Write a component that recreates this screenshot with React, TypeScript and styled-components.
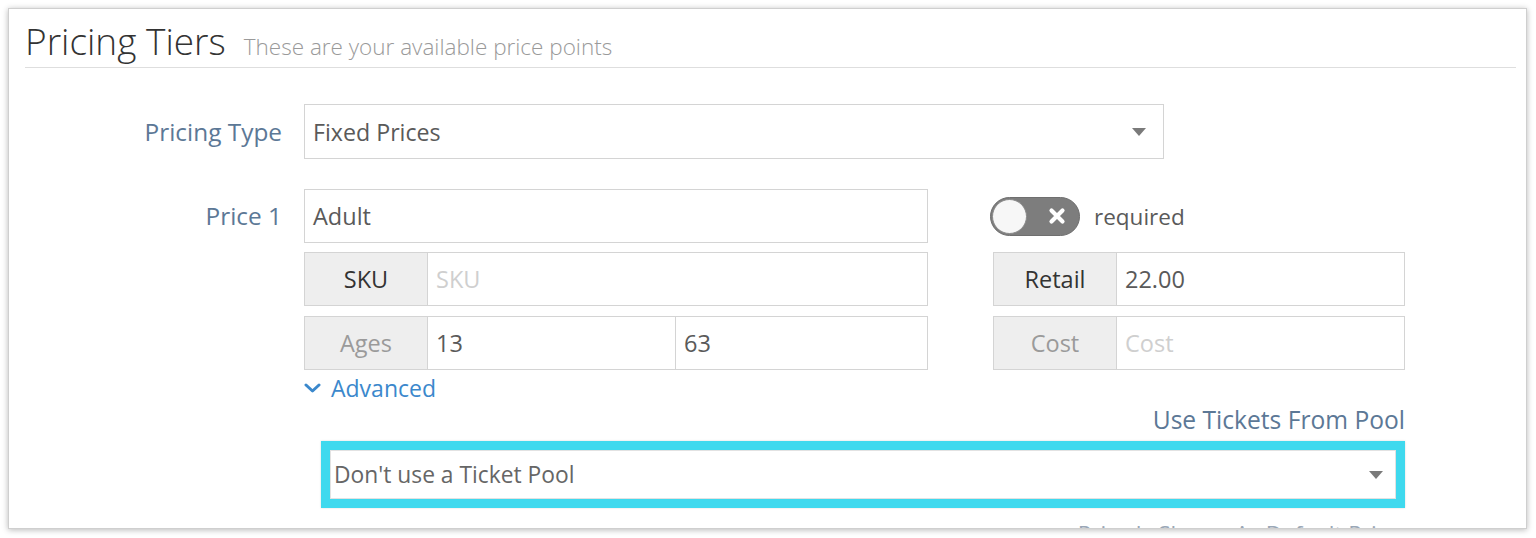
import React from "react";
import styled, { createGlobalStyle } from "styled-components";

const GlobalStyle = createGlobalStyle`
  html, body { margin: 0; padding: 0; background: #ffffff; }
  body { font-family: "Open Sans", "Noto Sans", sans-serif; }
  * { box-sizing: border-box; }
`;

const Page = styled.div`
  padding: 8px;
`;

const Card = styled.section`
  width: 1519px;
  height: 521px;
  background: #fff;
  border: 1px solid #cfcfcf;
  box-shadow: 0 1px 6px rgba(0, 0, 0, 0.28);
  overflow: hidden;
  padding: 0 10px 0 16px;
`;

const Header = styled.header`
  display: flex;
  align-items: baseline;
  gap: 18px;
  height: 59px;
  padding-top: 11px;
  border-bottom: 1px solid #dedede;
`;

const Title = styled.h1`
  margin: 0;
  font-size: 37px;
  font-weight: 300;
  color: #333;
  line-height: 42px;
`;

const Subtitle = styled.span`
  font-size: 22.5px;
  font-weight: 300;
  color: #9a9a9a;
`;

const Form = styled.div`
  padding-top: 36px;
`;

const Row = styled.div<{ $mt?: number }>`
  display: grid;
  grid-template-columns: 257px 1fr;
  column-gap: 22px;
  margin-top: ${(p) => p.$mt ?? 0}px;
`;

const Label = styled.label<{ $h?: number }>`
  text-align: right;
  font-size: 24.4px;
  color: #5c7896;
  height: ${(p) => p.$h ?? 54}px;
  line-height: ${(p) => p.$h ?? 54}px;
  white-space: nowrap;
`;

const SelectBox = styled.div<{ $w?: number }>`
  position: relative;
  width: ${(p) => (p.$w ? `${p.$w}px` : "100%")};
  height: 55px;
  border: 1px solid #d4d4d4;
  background: #fff;
  display: flex;
  align-items: center;
  padding: 0 8px;
  font-size: 23.2px;
  color: #5a5a5a;
`;

const Caret = styled.svg<{ $right: number }>`
  position: absolute;
  right: ${(p) => p.$right}px;
  top: 50%;
  margin-top: -4px;
`;

const Columns = styled.div`
  display: grid;
  grid-template-columns: 624px 412px;
  column-gap: 65px;
`;

const Stack = styled.div`
  display: flex;
  flex-direction: column;
`;

const Input = styled.div<{ $placeholder?: boolean }>`
  flex: 1;
  height: 54px;
  border: 1px solid #d4d4d4;
  background: #fff;
  display: flex;
  align-items: center;
  padding: 0 8px;
  font-size: 23.5px;
  color: ${(p) => (p.$placeholder ? "#cfcfcf" : "#5a5a5a")};
  min-width: 0;
`;

const Group = styled.div<{ $mt?: number }>`
  display: flex;
  height: 54px;
  margin-top: ${(p) => p.$mt ?? 0}px;
  & > * + * { border-left: none; }
`;

const Addon = styled.div<{ $muted?: boolean }>`
  flex: 0 0 124px;
  height: 54px;
  border: 1px solid #d4d4d4;
  background: #eeeeee;
  display: flex;
  align-items: center;
  justify-content: center;
  font-size: 23.5px;
  color: ${(p) => (p.$muted ? "#9a9a9a" : "#333")};
`;

const HalfInput = styled(Input)<{ $w: number }>`
  flex: 0 0 ${(p) => p.$w}px;
`;

const AdvancedLink = styled.a`
  display: flex;
  align-items: center;
  gap: 10px;
  margin-top: 4px;
  height: 28px;
  font-size: 23px;
  color: #3b88cc;
  text-decoration: none;
  cursor: pointer;
`;

const ToggleRow = styled.div`
  display: flex;
  align-items: center;
  height: 54px;
  margin-left: -3px;
  gap: 14px;
  font-size: 22.5px;
  color: #5a5a5a;
`;

const Toggle = styled.div`
  position: relative;
  width: 90px;
  height: 39px;
  border-radius: 20px;
  background: #7d7d7d;
  border: 1px solid #6f6f6f;
  display: flex;
  align-items: center;
  justify-content: flex-end;
  padding-right: 13px;
`;

const Knob = styled.span`
  position: absolute;
  left: 1px;
  top: 1px;
  width: 35px;
  height: 35px;
  border-radius: 50%;
  background: #f7f7f7;
  border: 1px solid #8a8a8a;
`;

const PoolLabelRow = styled.div`
  width: 1380px;
  text-align: right;
  font-size: 24.6px;
  color: #5c7896;
  line-height: 28px;
  margin-top: 4px;
`;

const PoolWrap = styled.div`
  margin-left: 296px;
  margin-top: 7px;
  width: 1084px;
  border: 9px solid #3fd9ee;
  box-shadow: 0 0 2px rgba(0, 0, 0, 0.15);
`;

const PoolSelect = styled.div`
  position: relative;
  height: 49px;
  background: #fff;
  border: 1px solid #e2e2e2;
  display: flex;
  align-items: center;
  padding: 0 3px;
  font-size: 22.8px;
  color: #666;
`;

const FootLabel = styled.div`
  width: 1375px;
  text-align: right;
  font-size: 22.5px;
  color: #9aa7b6;
  line-height: 28px;
  margin-top: 12px;
`;

const CaretIcon = ({ right }: { right: number }) => (
  <Caret $right={right} width="14" height="8" viewBox="0 0 14 8">
    <path d="M0 0 H14 L7 8 Z" fill="#7a7a7a" />
  </Caret>
);

export default function App() {
  return (
    <>
      <GlobalStyle />
      <Page>
        <Card>
          <Header>
            <Title>Pricing Tiers</Title>
            <Subtitle>These are your available price points</Subtitle>
          </Header>
          <Form>
            <Row>
              <Label $h={55}>Pricing Type</Label>
              <SelectBox $w={860}>
                Fixed Prices
                <CaretIcon right={17} />
              </SelectBox>
            </Row>
            <Row $mt={30}>
              <Label>Price 1</Label>
              <Columns>
                <Stack>
                  <Group>
                    <Input>Adult</Input>
                  </Group>
                  <Group $mt={9}>
                    <Addon>SKU</Addon>
                    <Input $placeholder>SKU</Input>
                  </Group>
                  <Group $mt={10}>
                    <Addon $muted>Ages</Addon>
                    <HalfInput $w={248}>13</HalfInput>
                    <HalfInput $w={252}>63</HalfInput>
                  </Group>
                  <AdvancedLink>
                    <svg width="17" height="10" viewBox="0 0 17 10">
                      <path
                        d="M2 2 L8.5 8 L15 2"
                        fill="none"
                        stroke="#3b88cc"
                        strokeWidth="3"
                        strokeLinecap="round"
                        strokeLinejoin="round"
                      />
                    </svg>
                    Advanced
                  </AdvancedLink>
                </Stack>
                <Stack>
                  <ToggleRow>
                    <Toggle>
                      <Knob />
                      <svg width="18" height="18" viewBox="0 0 18 18">
                        <path
                          d="M3.5 3.5 L14.5 14.5 M14.5 3.5 L3.5 14.5"
                          stroke="#fff"
                          strokeWidth="4.2"
                          strokeLinecap="round"
                        />
                      </svg>
                    </Toggle>
                    required
                  </ToggleRow>
                  <Group $mt={9}>
                    <Addon>Retail</Addon>
                    <Input>22.00</Input>
                  </Group>
                  <Group $mt={10}>
                    <Addon $muted>Cost</Addon>
                    <Input $placeholder>Cost</Input>
                  </Group>
                </Stack>
              </Columns>
            </Row>
            <PoolLabelRow>Use Tickets From Pool</PoolLabelRow>
            <PoolWrap>
              <PoolSelect>
                Don't use a Ticket Pool
                <CaretIcon right={12} />
              </PoolSelect>
            </PoolWrap>
            <FootLabel>Price Is Shown As Default Price</FootLabel>
          </Form>
        </Card>
      </Page>
    </>
  );
}
